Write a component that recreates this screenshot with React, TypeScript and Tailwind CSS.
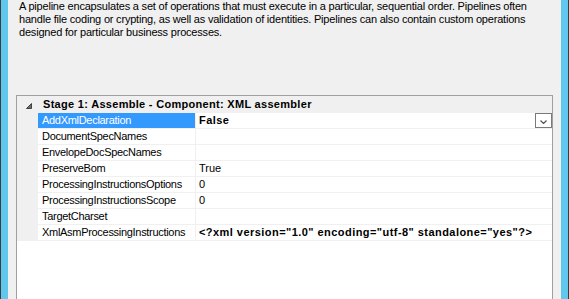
import React from "react";

type Row = { name: string; value: string; bold?: boolean; selected?: boolean };

const rows: Row[] = [
  { name: "AddXmlDeclaration", value: "False", bold: true, selected: true },
  { name: "DocumentSpecNames", value: "" },
  { name: "EnvelopeDocSpecNames", value: "" },
  { name: "PreserveBom", value: "True" },
  { name: "ProcessingInstructionsOptions", value: "0" },
  { name: "ProcessingInstructionsScope", value: "0" },
  { name: "TargetCharset", value: "" },
  {
    name: "XmlAsmProcessingInstructions",
    value: '<?xml version="1.0" encoding="utf-8" standalone="yes"?>',
    bold: true,
  },
];

const Expander = () => (
  <svg width="6" height="6" viewBox="0 0 6 6" className="block">
    <polygon points="5.5,0.5 5.5,5.5 0.5,5.5" fill="#6d6d6d" stroke="#404040" strokeWidth="1" />
  </svg>
);

const DropButton = () => (
  <div className="absolute right-0 top-0 w-[17px] h-[15px] border border-[#7a7a7a] bg-white flex items-center justify-center">
    <svg width="7" height="4" viewBox="0 0 7 4" className="block mt-[2px]">
      <path d="M0.5 0.5 L3.5 3.5 L6.5 0.5" fill="none" stroke="#555" strokeWidth="1.2" />
    </svg>
  </div>
);

export default function App() {
  return (
    <div className="w-[569px] h-[299px] flex bg-[#f0f0f0] overflow-hidden font-['Liberation_Sans',Arial,sans-serif] text-[11px] text-black">
      <div className="w-px bg-[#3c3c3c]" />
      <div className="w-[7px] bg-[#5fc8ec]" />
      <div className="flex-1 flex flex-col px-[8px]">
        <p className="h-[95px] pl-[3px] leading-[13px] tracking-[-0.2px] whitespace-nowrap">
          A pipeline encapsulates a set of operations that must execute in a particular, sequential order. Pipelines often
          <br />
          handle file coding or crypting, as well as validation of identities. Pipelines can also contain custom operations
          <br />
          designed for particular business processes.
        </p>
        <div className="flex-1 border-x border-t border-[#a0a0a0] bg-white flex flex-col">
          <div className="h-[17px] bg-[#f0f0f0] flex items-center">
            <div className="w-[21px] flex justify-end pr-[6px] mt-[2px]">
              <Expander />
            </div>
            <span className="pl-[5px] font-bold tracking-[0.3px] whitespace-nowrap">
              Stage 1: Assemble - Component: XML assembler
            </span>
          </div>
          {rows.map((r) => (
            <div key={r.name} className="h-[16px] flex">
              <div className="w-[21px] bg-[#f0f0f0]" />
              <div
                className={
                  r.selected
                    ? "w-[157px] h-[16px] pl-[4px] pb-px flex items-center border-b border-[#f0f0f0] bg-[#3399ff] bg-clip-padding text-white whitespace-nowrap tracking-[-0.3px]"
                    : "w-[157px] h-[16px] pl-[4px] pb-px flex items-center border-b border-[#f0f0f0] whitespace-nowrap tracking-[-0.3px]"
                }
              >
                {r.name}
              </div>
              <div className="w-px bg-[#f0f0f0]" />
              <div className="relative flex-1 h-[16px] pl-[3px] pb-px flex items-center whitespace-nowrap border-b border-[#f0f0f0]">
                <span className={r.bold ? "font-bold tracking-[0.45px]" : ""}>{r.value}</span>
                {r.selected && <DropButton />}
              </div>
            </div>
          ))}
        </div>
      </div>
      <div className="w-[7px] bg-[#5fc8ec]" />
      <div className="w-px bg-[#3c3c3c]" />
    </div>
  );
}
